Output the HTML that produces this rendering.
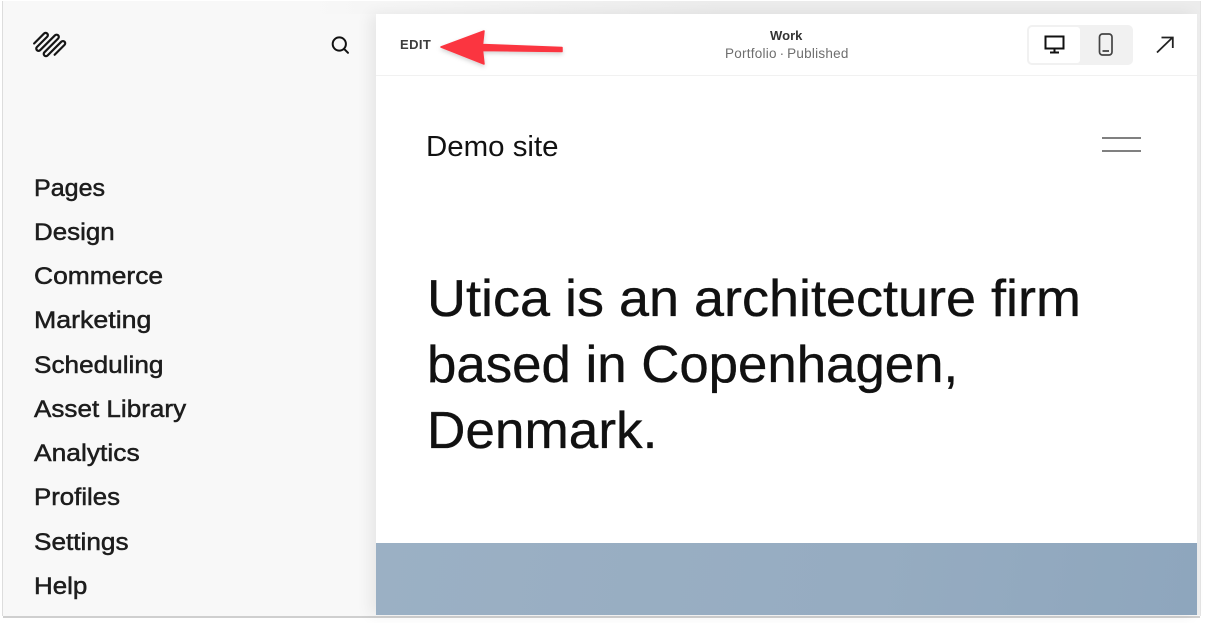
<!DOCTYPE html>
<html lang="en"><head><meta charset="utf-8"><title>Work</title>
<style>
html,body{margin:0;padding:0;background:#fff}
body{width:1208px;height:623px;position:relative;overflow:hidden;font-family:"Liberation Sans",sans-serif}
#w{position:absolute;left:0;top:0;width:1208px;height:623px;filter:blur(.35px)}
.t{position:absolute;white-space:nowrap;line-height:1;transform-origin:0 50%}
.shell{position:absolute;left:3px;top:1px;width:1197px;height:615px;background:#f8f8f8;box-shadow:0 2px 0 #cfcfcf,-1px 0 0 #ddd,1px 0 0 #e4e4e4}
.nav{font-size:24px;color:#1d1d1d;left:34px;-webkit-text-stroke:.5px #1d1d1d}
.panel{position:absolute;left:376px;top:14px;width:821px;height:601px;background:#fff;box-shadow:-6px 0 14px rgba(0,0,0,.07);overflow:hidden}
.band{position:absolute;left:376px;top:543px;width:821px;height:72px;background:linear-gradient(100deg,#9bb0c4,#96acc1 60%,#8ea6bd)}
.h{font-size:52px;left:427px;color:#111;-webkit-text-stroke:.35px #111}
svg{position:absolute;overflow:visible}
</style></head><body><div id="w">
<div class="shell"></div>
<div style="position:absolute;left:1197px;top:14px;width:3px;height:601px;background:#eee"></div>
<div style="position:absolute;left:3px;top:1px;width:1197px;height:13px;background:linear-gradient(90deg,#f8f8f8 25%,#ececec 60%)"></div>

<svg style="left:0;top:0" width="100" height="90" fill="none" stroke="#161616" stroke-width="2.2" stroke-linecap="round">
<g transform="translate(49.5 44) rotate(-45)">
<path d="M-10.5 -11.25 H3.5 A2.25 2.25 0 0 1 3.5 -6.75 H-11 A2.25 2.25 0 0 0 -11 -2.25 H10 A2.25 2.25 0 0 1 10 2.25 H-9.5 A2.25 2.25 0 0 0 -9.5 6.75 H10 A2.25 2.25 0 0 1 10 11.25 H-4"/>
</g></svg>
<svg style="left:330px;top:35px" width="20" height="20" viewBox="0 0 20 20" fill="none" stroke="#111" stroke-width="2" stroke-linecap="round">
<circle cx="9.3" cy="9" r="6.6"/><path d="M14 13.8 L18 17.8"/></svg>

<div class="t nav" style="top:177px;transform:scaleX(1.044)">Pages</div>
<div class="t nav" style="top:221px;transform:scaleX(1.08)">Design</div>
<div class="t nav" style="top:265px;transform:scaleX(1.10)">Commerce</div>
<div class="t nav" style="top:309px;transform:scaleX(1.114)">Marketing</div>
<div class="t nav" style="top:354px;transform:scaleX(1.09)">Scheduling</div>
<div class="t nav" style="top:398px;transform:scaleX(1.086)">Asset Library</div>
<div class="t nav" style="top:442px;transform:scaleX(1.10)">Analytics</div>
<div class="t nav" style="top:486px;transform:scaleX(1.075)">Profiles</div>
<div class="t nav" style="top:531px;transform:scaleX(1.09)">Settings</div>
<div class="t nav" style="top:575px;transform:scaleX(1.08)">Help</div>

<div class="panel"></div>
<div style="position:absolute;left:376px;top:75px;width:821px;height:1px;background:#f1f1f1"></div>
<div class="band"></div>

<div class="t" style="left:400px;top:38px;font-size:13px;font-weight:bold;color:#3d3d3d;letter-spacing:.4px">EDIT</div>
<svg style="left:0;top:0" width="600" height="80">
<defs><filter id="s" x="-20%" y="-20%" width="140%" height="150%"><feDropShadow dx="0" dy="2" stdDeviation="2" flood-color="#000" flood-opacity=".18"/></filter></defs>
<path filter="url(#s)" fill="#fb3640" stroke="#fb3640" stroke-width="1.5" stroke-linejoin="round" d="M441 47 L484 31 L482.5 44.5 L562 47.5 L562 51.5 L482.5 50.5 L484 64 Z"/>
</svg>

<div class="t" style="left:770px;top:29px;font-size:13px;font-weight:bold;color:#333;letter-spacing:.05px">Work</div>
<div class="t" style="left:725px;top:47px;font-size:13.5px;color:#6e6e6e;letter-spacing:.25px;word-spacing:-1.2px">Portfolio · Published</div>

<div style="position:absolute;left:1027px;top:25px;width:106px;height:40px;background:#f1f1f1;border-radius:5px"></div>
<div style="position:absolute;left:1029px;top:27px;width:51px;height:36px;background:#fff;border-radius:3px"></div>
<svg style="left:1044px;top:35px" width="22" height="20" viewBox="0 0 22 20" fill="none" stroke="#111" stroke-width="2">
<rect x="1.5" y="1.5" width="18" height="12"/><path d="M10.5 14v3M6 17.5h9"/></svg>
<svg style="left:1098px;top:33px" width="16" height="24" viewBox="0 0 16 24" fill="none" stroke="#444" stroke-width="1.7">
<rect x="1.5" y="1" width="12.5" height="21" rx="3"/><path d="M4.5 18h6.5" stroke-width="1.8"/></svg>
<svg style="left:1156px;top:36px" width="20" height="18" viewBox="0 0 20 18" fill="none" stroke="#222" stroke-width="1.8">
<path d="M1 16.5 L16.5 1.5 M5.5 1.5 H16.8 V12"/></svg>

<div class="t" style="left:426px;top:133px;font-size:29px;color:#111;transform:scaleX(1.015)">Demo site</div>
<div style="position:absolute;left:1102px;top:137px;width:39px;height:1.5px;background:#808080"></div>
<div style="position:absolute;left:1102px;top:150px;width:39px;height:1.5px;background:#808080"></div>

<div class="t h" style="top:273px;transform:scaleX(1.038)">Utica is an architecture firm</div>
<div class="t h" style="top:339px;transform:scaleX(1.015)">based in Copenhagen,</div>
<div class="t h" style="top:405px;transform:scaleX(1.022)">Denmark.</div>
</div></body></html>
